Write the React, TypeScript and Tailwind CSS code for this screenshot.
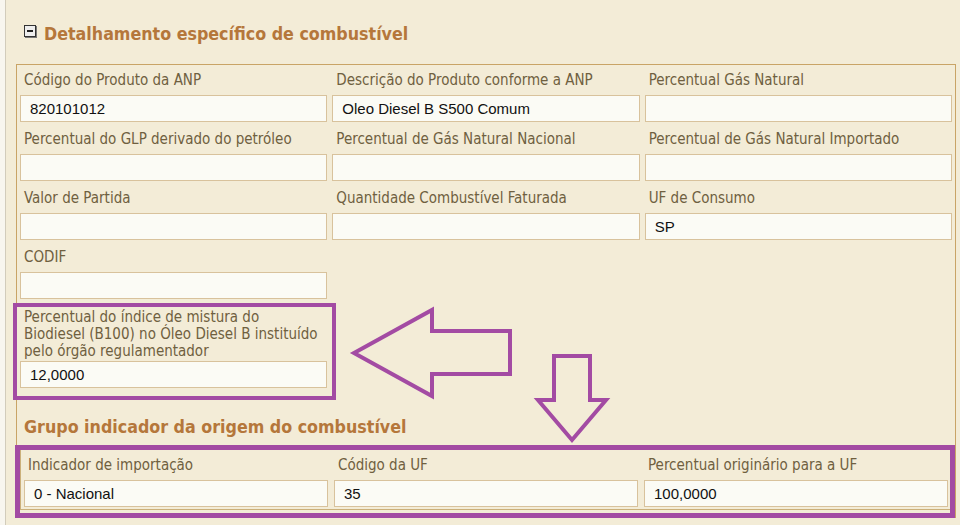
import React from 'react';

const labelCls = "block pl-[4px] text-[15px] leading-[17px] text-[#6f6040] font-['DejaVu_Sans_Condensed','DejaVu_Sans',sans-serif] whitespace-nowrap";
const inputCls = "block h-[27px] w-full border border-[#d8c29c] bg-[#fbfbf5] pl-[9px] text-[15px] leading-[25px] text-[#111] font-['Liberation_Sans',Arial,sans-serif]";
const titleCls = "text-[17.7px] leading-[22px] font-bold text-[#b5773b] font-['DejaVu_Sans_Condensed','DejaVu_Sans',sans-serif]";

type Field = { label: string; value?: string };

const rows: Field[] = [
  { label: 'Código do Produto da ANP', value: '820101012' },
  { label: 'Descrição do Produto conforme a ANP', value: 'Oleo Diesel B S500 Comum' },
  { label: 'Percentual Gás Natural' },
  { label: 'Percentual do GLP derivado do petróleo' },
  { label: 'Percentual de Gás Natural Nacional' },
  { label: 'Percentual de Gás Natural Importado' },
  { label: 'Valor de Partida' },
  { label: 'Quantidade Combustível Faturada' },
  { label: 'UF de Consumo', value: 'SP' },
  { label: 'CODIF' },
];

const origem: Field[] = [
  { label: 'Indicador de importação', value: '0 - Nacional' },
  { label: 'Código da UF', value: '35' },
  { label: 'Percentual originário para a UF', value: '100,0000' },
];

function Cell({ label, value }: Field) {
  return (
    <div>
      <span className={labelCls}>{label}</span>
      <div className={`${inputCls} mt-[6px]`}>{value}</div>
    </div>
  );
}

function Arrows() {
  return (
    <svg className="pointer-events-none absolute left-0 top-0" width="960" height="525" viewBox="0 0 960 525">
      <g fill="none" stroke="#a34ba3" strokeWidth="4" strokeLinejoin="miter">
        <polygon points="354,353 432,310 432,331 510,331 510,374 432,374 432,396" />
        <polygon points="554,356 590,356 590,400 606,400 572,440 538,400 554,400" />
      </g>
    </svg>
  );
}

export default function App() {
  return (
    <div className="relative flex h-[525px] w-[960px] overflow-hidden bg-[#f3ecd7]">
      <div className="w-[6px] shrink-0 border-r border-[#d2ccbb] bg-[#f8f6ef]" />
      <div className="flex-1 pl-[10px] pr-[4px]">
        <div className="flex h-[64px] items-start pt-[23px]">
          <div className="ml-[8px] mt-[2px] flex h-[12px] w-[12px] items-center justify-center border border-[#333] bg-[#eeeeee] shadow-[1px_1px_0_#777]">
            <div className="h-[2px] w-[6px] bg-[#222]" />
          </div>
          <h2 className={`${titleCls} ml-[8px]`}>Detalhamento específico de combustível</h2>
        </div>

        <div className="border border-[#c9a466] px-[3px] pt-[7px]">
          <div className="grid grid-cols-3 gap-x-[5px] gap-y-[9px]">
            {rows.map((f) => (
              <Cell key={f.label} {...f} />
            ))}
            <div className="col-start-1 -ml-[7px] -mr-[9px] -mt-[5px] border-4 border-[#a34ba3] pb-[8px] pl-[3px] pr-[5px] pt-[2px]">
              <span className={labelCls}>
                Percentual do índice de mistura do
                <br />
                Biodiesel (B100) no Óleo Diesel B instituído
                <br />
                pelo órgão regulamentador
              </span>
              <div className={`${inputCls} mt-[1px]`}>12,0000</div>
            </div>
          </div>

          <h3 className={`${titleCls} mt-[16px] pl-[4px]`}>Grupo indicador da origem do combustível</h3>

          <div className="-mb-[1px] -ml-[5px] -mr-[3px] mt-[7px] border-[5px] border-[#a34ba3] pb-[3px]">
            <div className="border-b border-l border-[#cbb07a] pb-[2px] pl-[3px] pr-[2px] pt-[7px]">
              <div className="grid grid-cols-3 gap-x-[6px]">
                {origem.map((f) => (
                  <Cell key={f.label} {...f} />
                ))}
              </div>
            </div>
          </div>
        </div>
      </div>
      <Arrows />
    </div>
  );
}
